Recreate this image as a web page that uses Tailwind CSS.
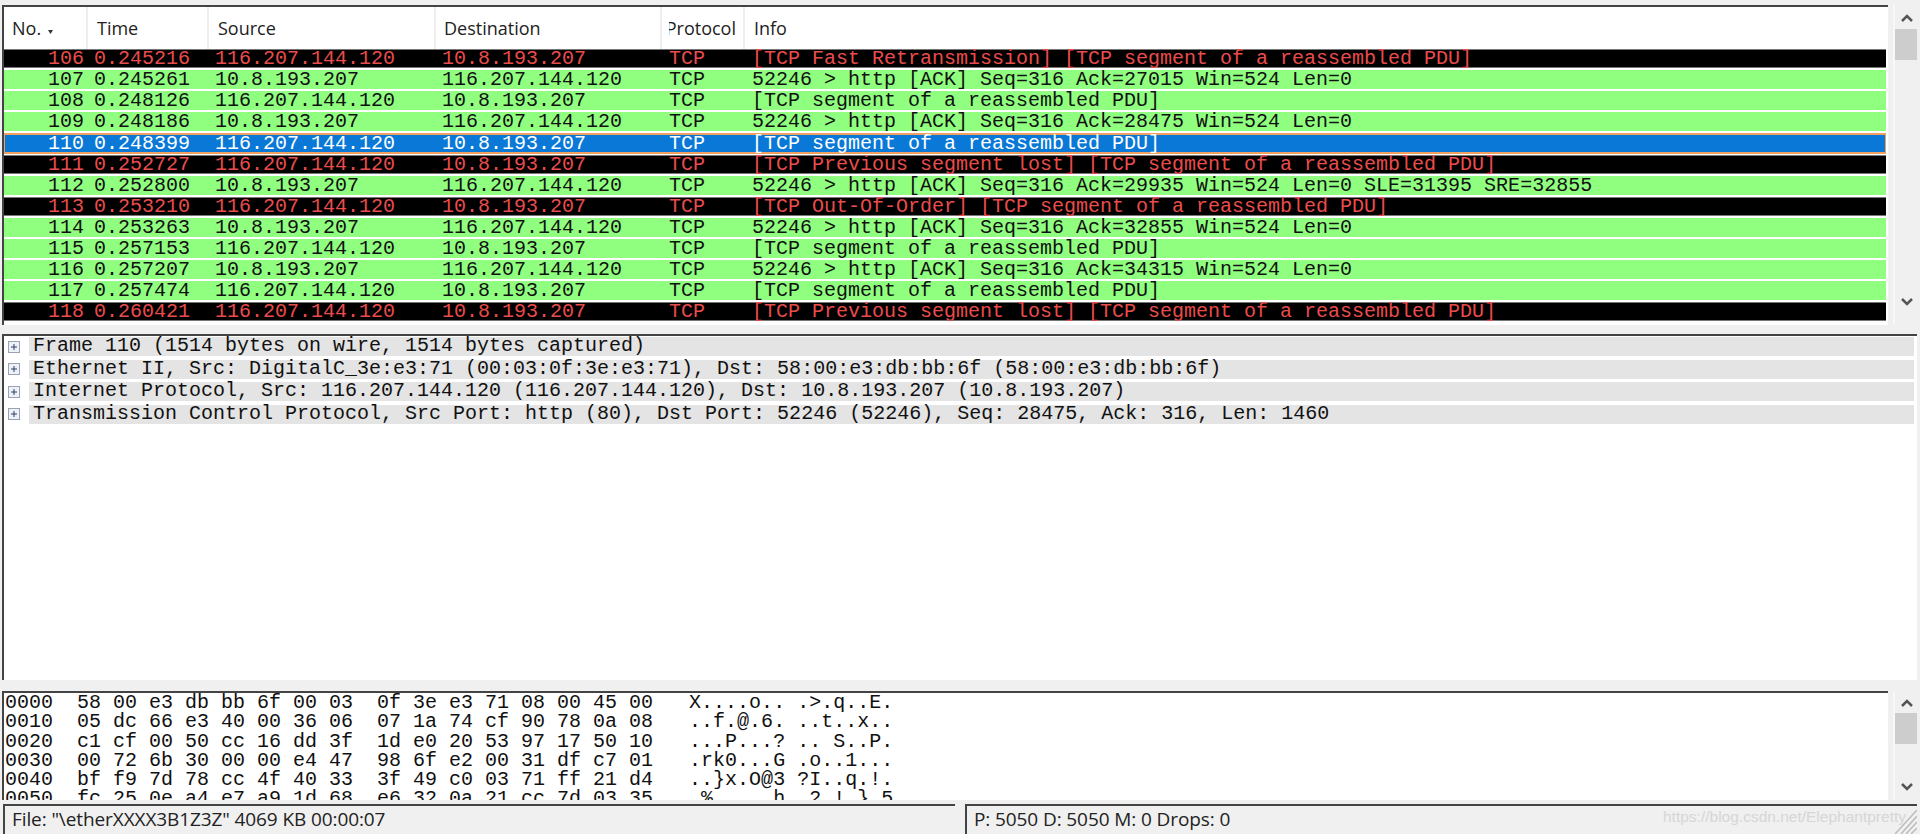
<!DOCTYPE html>
<html lang="en">
<head>
  <meta charset="UTF-8" />
  <title>Wireshark capture</title>
  <script src="https://cdn.jsdelivr.net/npm/@tailwindcss/browser@4"></script>
</head>
<body class="bg-[#f0f0f0] h-[834px] w-[1920px] overflow-hidden flex flex-col pt-[5px] relative">

  <!-- packet list -->
  <section class="flex h-[320px] shrink-0">
    <div class="ml-[2px] w-[1886px] bg-white border-t-2 border-l-2 border-[#444] pr-[2px] overflow-hidden">
      <div class="flex h-[42px] items-center font-['Open_Sans',sans-serif] text-[18px] text-[#222] bg-white">
        <div class="w-[84px] h-full pl-[8px] flex items-center border-r-2 border-[#eee]">No.
          <svg class="ml-[7px] mt-[7px]" width="5" height="4" viewBox="0 0 5 4"><path d="M0 0 H5 L2.5 4 Z" fill="#333"/></svg>
        </div>
        <div class="w-[121px] h-full pl-[9px] flex items-center border-r-2 border-[#eee]">Time</div>
        <div class="w-[227px] h-full pl-[9px] flex items-center border-r-2 border-[#eee]">Source</div>
        <div class="w-[226px] h-full pl-[8px] flex items-center border-r-2 border-[#eee]">Destination</div>
        <div class="w-[83px] h-full flex items-center border-r-2 border-[#eee] whitespace-nowrap">
          <div class="ml-[7px] w-[67px] overflow-hidden flex justify-end">Protocol</div>
        </div>
        <div class="pl-[9px]">Info</div>
      </div>
      <div id="packets" class="font-['Liberation_Mono',monospace] text-[20px]"></div>
    </div>
    <div class="ml-[5px] w-[27px] border-l-2 border-[#f8f8f8] flex flex-col items-center">
      <svg class="mt-[8px] ml-[-2px]" width="14" height="10" viewBox="0 0 14 10"><path d="M2 8 L7 3 L12 8" fill="none" stroke="#555" stroke-width="2.5"/></svg>
      <div class="mt-[6px] w-[22px] h-[31px] bg-[#cdcdcd] ml-[-3px]"></div>
      <svg class="mt-[237px] ml-[-2px]" width="14" height="10" viewBox="0 0 14 10"><path d="M2 2 L7 7 L12 2" fill="none" stroke="#555" stroke-width="2.5"/></svg>
    </div>
  </section>

  <!-- packet details -->
  <section class="mt-[9px] ml-[2px] w-[1915px] h-[346px] shrink-0 bg-white border-t-2 border-l-2 border-[#444] pt-[1px] pr-[3px] font-['Liberation_Mono',monospace] text-[20px] text-[#111]">
    <div id="details" class="flex flex-col gap-[3.67px]"></div>
  </section>

  <!-- hex dump -->
  <section class="flex mt-[11px] h-[109px] shrink-0">
    <div class="ml-[2px] w-[1886px] bg-white border-t-2 border-l-2 border-[#444] overflow-hidden pl-[1px]">
      <pre id="hex" class="h-[107px] overflow-hidden font-['Liberation_Mono',monospace] text-[20px] leading-[19.3px] text-[#111]">0000  58 00 e3 db bb 6f 00 03  0f 3e e3 71 08 00 45 00   X....o.. .&gt;.q..E.
0010  05 dc 66 e3 40 00 36 06  07 1a 74 cf 90 78 0a 08   ..f.@.6. ..t..x..
0020  c1 cf 00 50 cc 16 dd 3f  1d e0 20 53 97 17 50 10   ...P...? .. S..P.
0030  00 72 6b 30 00 00 e4 47  98 6f e2 00 31 df c7 01   .rk0...G .o..1...
0040  bf f9 7d 78 cc 4f 40 33  3f 49 c0 03 71 ff 21 d4   ..}x.O@3 ?I..q.!.
0050  fc 25 0e a4 e7 a9 1d 68  e6 32 0a 21 cc 7d 03 35   .%.....h .2.!.}.5</pre>
    </div>
    <div class="ml-[5px] w-[27px] border-l-2 border-[#f8f8f8] flex flex-col items-center">
      <svg class="mt-[7px] ml-[-2px]" width="14" height="10" viewBox="0 0 14 10"><path d="M2 8 L7 3 L12 8" fill="none" stroke="#555" stroke-width="2.5"/></svg>
      <div class="mt-[5px] w-[22px] h-[31px] bg-[#cdcdcd] ml-[-3px]"></div>
      <svg class="mt-[38px] ml-[-2px]" width="14" height="10" viewBox="0 0 14 10"><path d="M2 2 L7 7 L12 2" fill="none" stroke="#555" stroke-width="2.5"/></svg>
    </div>
  </section>

  <!-- status bar -->
  <footer class="mt-[4px] ml-[3px] w-[1914px] flex-1 flex gap-[10px] font-['Open_Sans',sans-serif] text-[19px] tracking-[-0.1px] text-[#222] relative">
    <div class="w-[952px] border-t-2 border-l-2 border-[#444] pl-[7px] leading-[26px]">File: "\etherXXXX3B1Z3Z" 4069 KB 00:00:07</div>
    <div class="flex-1 border-t-2 border-l-2 border-[#444] pl-[7px] leading-[26px]">P: 5050 D: 5050 M: 0 Drops: 0</div>
    <span class="absolute left-[1660px] top-[1px] font-['Liberation_Sans',sans-serif] text-[15.5px] tracking-normal text-[#d6d6d6] whitespace-nowrap">https://blog.csdn.net/Elephantpretty</span>
    <svg class="absolute right-[0px] bottom-[0px]" width="22" height="24" viewBox="0 0 22 24"><path d="M22 0 L0 24 M22 6 L6 24 M22 12 L11 24 M22 18 L16 24" stroke="#bbb" stroke-width="1.5"/></svg>
  </footer>

  <script>
    const packets = [
      ["106", "0.245216", "116.207.144.120", "10.8.193.207", "[TCP Fast Retransmission] [TCP segment of a reassembled PDU]", "bad"],
      ["107", "0.245261", "10.8.193.207", "116.207.144.120", "52246 > http [ACK] Seq=316 Ack=27015 Win=524 Len=0", "ok"],
      ["108", "0.248126", "116.207.144.120", "10.8.193.207", "[TCP segment of a reassembled PDU]", "ok"],
      ["109", "0.248186", "10.8.193.207", "116.207.144.120", "52246 > http [ACK] Seq=316 Ack=28475 Win=524 Len=0", "ok"],
      ["110", "0.248399", "116.207.144.120", "10.8.193.207", "[TCP segment of a reassembled PDU]", "sel"],
      ["111", "0.252727", "116.207.144.120", "10.8.193.207", "[TCP Previous segment lost] [TCP segment of a reassembled PDU]", "bad"],
      ["112", "0.252800", "10.8.193.207", "116.207.144.120", "52246 > http [ACK] Seq=316 Ack=29935 Win=524 Len=0 SLE=31395 SRE=32855", "ok"],
      ["113", "0.253210", "116.207.144.120", "10.8.193.207", "[TCP Out-Of-Order] [TCP segment of a reassembled PDU]", "bad"],
      ["114", "0.253263", "10.8.193.207", "116.207.144.120", "52246 > http [ACK] Seq=316 Ack=32855 Win=524 Len=0", "ok"],
      ["115", "0.257153", "116.207.144.120", "10.8.193.207", "[TCP segment of a reassembled PDU]", "ok"],
      ["116", "0.257207", "10.8.193.207", "116.207.144.120", "52246 > http [ACK] Seq=316 Ack=34315 Win=524 Len=0", "ok"],
      ["117", "0.257474", "116.207.144.120", "10.8.193.207", "[TCP segment of a reassembled PDU]", "ok"],
      ["118", "0.260421", "116.207.144.120", "10.8.193.207", "[TCP Previous segment lost] [TCP segment of a reassembled PDU]", "bad"],
    ];
    const rowStyles = {
      bad: "bg-black text-[#ea4c4c] border-y border-[#777] h-[19px] mb-[2px]",
      ok: "bg-[#90ff80] text-[#111] h-[19px] mb-[2px]",
      sel: "bg-[#0a78d7] text-white border-y-2 border-[#f0a060] shadow-[inset_1px_0_0_#f0a060,inset_-1px_0_0_#f0a060] h-[21px] mb-[1px]",
    };

    document.getElementById("packets").innerHTML = packets.map(p => `
      <div class="flex items-center whitespace-pre leading-[17px] ${rowStyles[p[5]]}">
        <span class="w-[80px] text-right">${p[0]}</span>
        <span class="w-[124px] pl-[10px]">${p[1]}</span>
        <span class="w-[234px] pl-[7px]">${p[2]}</span>
        <span class="w-[227px]">${p[3]}</span>
        <span class="w-[83px]">TCP</span>
        <span>${p[4].replace(/>/g, "&gt;")}</span>
      </div>`).join("");

    const details = [
      "Frame 110 (1514 bytes on wire, 1514 bytes captured)",
      "Ethernet II, Src: DigitalC_3e:e3:71 (00:03:0f:3e:e3:71), Dst: 58:00:e3:db:bb:6f (58:00:e3:db:bb:6f)",
      "Internet Protocol, Src: 116.207.144.120 (116.207.144.120), Dst: 10.8.193.207 (10.8.193.207)",
      "Transmission Control Protocol, Src Port: http (80), Dst Port: 52246 (52246), Seq: 28475, Ack: 316, Len: 1460",
    ];
    document.getElementById("details").innerHTML = details.map(d => `
      <div class="flex items-center h-[19px]">
        <svg class="ml-[4px] mr-[9px] shrink-0" width="12" height="12" viewBox="0 0 12 12"><rect x="0.5" y="0.5" width="11" height="11" fill="#eef1f8" stroke="#98a2b5"/><path d="M3 6 H9 M6 3 V9" stroke="#2f3f66"/></svg>
        <div class="flex-1 bg-[#e4e4e4] h-full pl-[4px] leading-[18px] whitespace-pre">${d}</div>
      </div>`).join("");
  </script>
</body>
</html>
